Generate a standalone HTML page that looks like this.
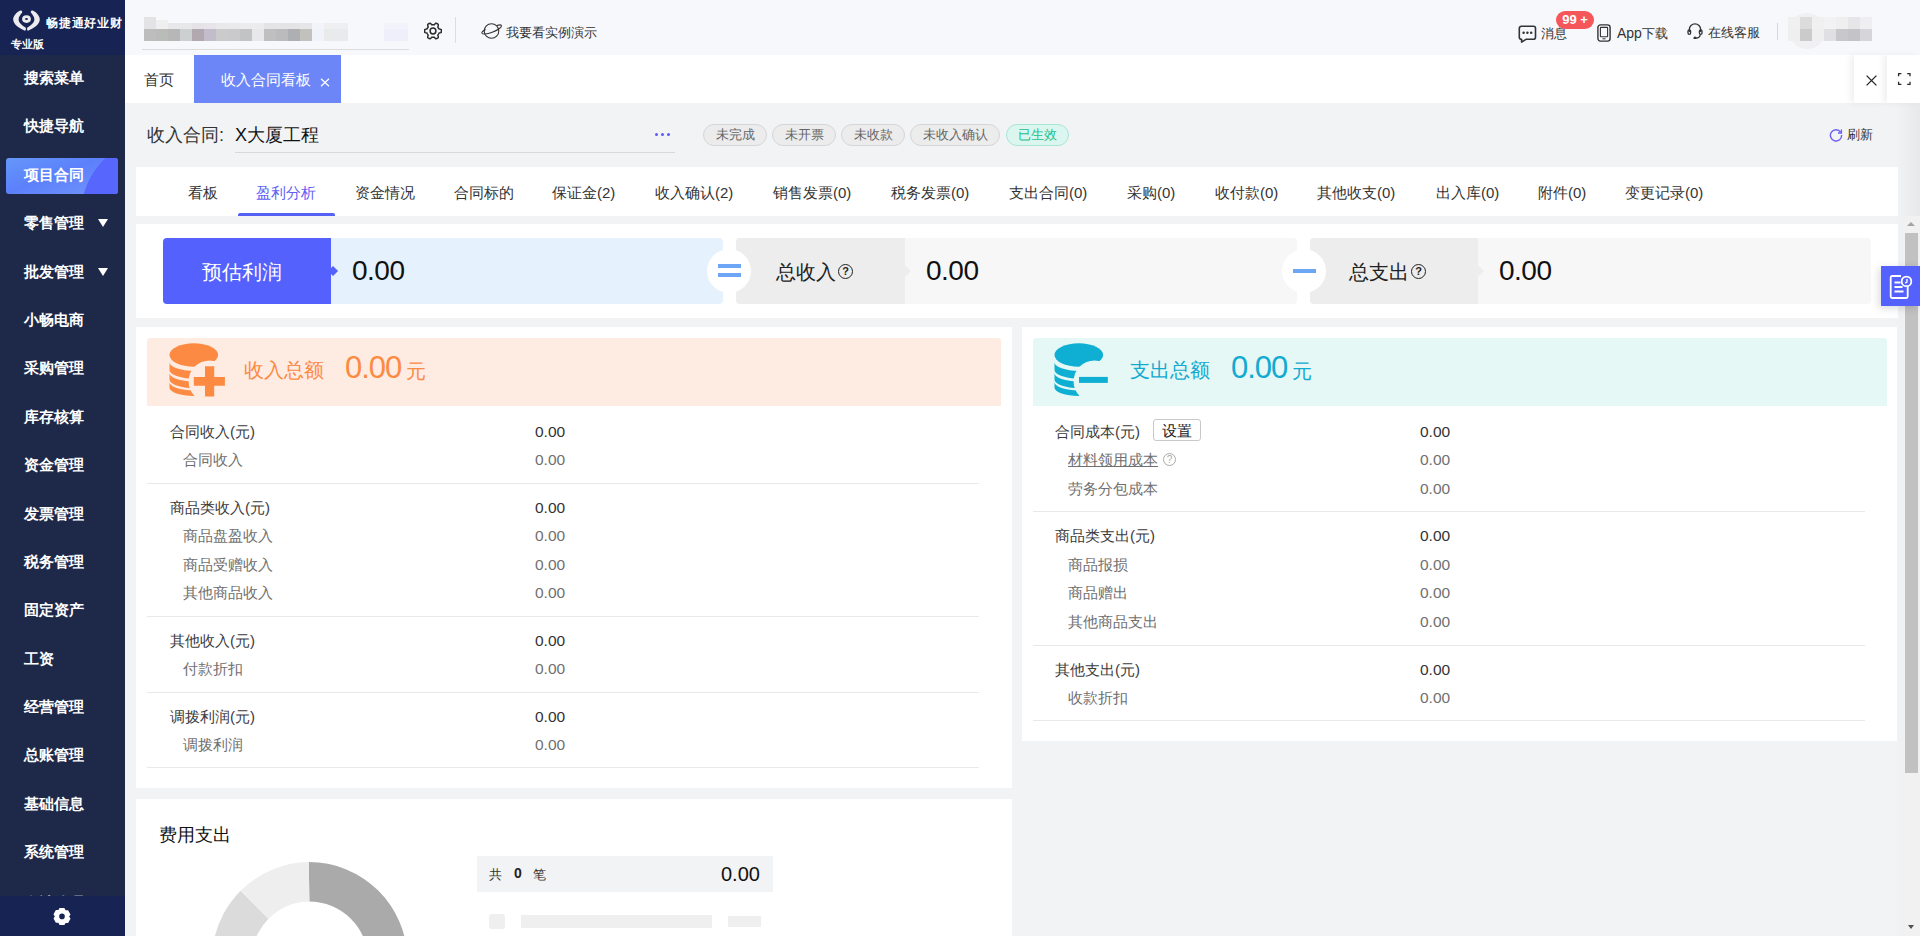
<!DOCTYPE html>
<html><head><meta charset="utf-8">
<style>
*{box-sizing:border-box;margin:0;padding:0}
html,body{width:1920px;height:936px;overflow:hidden;background:#f2f3f5;font-family:"Liberation Sans",sans-serif;color:#333}
.abs{position:absolute}
#side{position:absolute;left:0;top:0;width:125px;height:936px;background:#1e2949;overflow:hidden}
#logo{position:absolute;left:0;top:0;width:125px;height:55px;background:#172353}
.mi{position:absolute;left:24px;color:#fff;font-size:15px;font-weight:bold;line-height:20px;white-space:nowrap}
.tri{position:absolute;left:98px;width:0;height:0;border-left:5.5px solid transparent;border-right:5.5px solid transparent;border-top:8px solid #fff}
#sfoot{position:absolute;left:0;top:896px;width:125px;height:40px;background:#172353}
#hdr{position:absolute;left:125px;top:0;width:1795px;height:55px;background:#f7f8fc}
#tabbar{position:absolute;left:125px;top:55px;width:1795px;height:48px;background:#fff}
.px i,.px2 i{position:absolute;width:12px;height:12px;display:block}
.tag{position:absolute;top:124px;height:22px;border:1px solid #d6d6d6;border-radius:11px;background:#ececec;color:#666;font-size:13px;line-height:20px;text-align:center;white-space:nowrap}
.tab{position:absolute;top:17px;font-size:15px;color:#333;white-space:nowrap}
.bignum{position:absolute;top:255px;font-size:28px;color:#111;letter-spacing:-0.5px;white-space:nowrap}
.qm{position:absolute;width:15px;height:15px;border:1.5px solid #222;border-radius:50%;font-size:11px;font-weight:bold;line-height:12px;text-align:center;color:#222}
.qm::after{content:"?"}
.qm2{position:absolute;width:13px;height:13px;border:1px solid #aaa;border-radius:50%;font-size:10px;line-height:11px;text-align:center;color:#aaa}
.qm2::after{content:"?"}
.rl{position:absolute;font-size:15px;color:#3c3c3c;white-space:nowrap;line-height:20px}
.rv{position:absolute;font-size:15.5px;color:#333;white-space:nowrap;line-height:20px}
.sub{color:#707070}
.card{position:absolute;background:#fff}
</style></head><body>
<div id="side">
  <div id="logo"><svg class="abs" style="left:8px;top:6px" width="40" height="30" viewBox="0 0 40 30"><g fill="#ececf0"><path d="M12.2 4.6c1.4-.6 2.6.6 1.8 2.2C12.4 9 10.6 11 10.6 13.4c0 3 3.2 5.5 7 8.2.6.5.4 3.2-.6 3.1C11.8 22.6 5.2 18.6 5.2 13.6c0-3.8 3.6-7.4 7-9z"/><path d="M24.8 4.6c-1.4-.6-2.6.6-1.8 2.2 1.6 2.2 3.4 4.2 3.4 6.6 0 3-3.2 5.5-7 8.2-.6.5-.4 3.2.6 3.1 5.2-2.1 11.8-6.1 11.8-11.1 0-3.8-3.6-7.4-7-9z"/><ellipse cx="18.5" cy="13.1" rx="4.4" ry="3.8"/></g><ellipse cx="18.5" cy="13" rx="1.5" ry="1" fill="#1a2456"/></svg>
    <div class="abs" style="left:46px;top:16px;color:#fff;font-size:11.5px;font-weight:bold;letter-spacing:0.8px">畅捷通好业财</div>
    <div class="abs" style="left:11px;top:37px;color:#fff;font-size:11px;font-weight:bold">专业版</div>
  </div>
  <div class="mi" style="top:68px">搜索菜单</div>
  <div class="mi" style="top:116px">快捷导航</div>
  <div class="abs" style="left:6px;top:158px;width:112px;height:36px;border-radius:3px;overflow:hidden;background:linear-gradient(160deg,#6598fa 0%,#5c80fb 45%,#7596fb 100%)"><div class="abs" style="left:75px;top:-22px;width:158px;height:158px;border-radius:50%;background:#5767fd"></div></div>
  <div class="mi" style="top:165px">项目合同</div>
  <div class="mi" style="top:213px">零售管理</div><div class="tri" style="top:219px"></div>
  <div class="mi" style="top:262px">批发管理</div><div class="tri" style="top:268px"></div>
  <div class="mi" style="top:310px">小畅电商</div>
  <div class="mi" style="top:358px">采购管理</div>
  <div class="mi" style="top:407px">库存核算</div>
  <div class="mi" style="top:455px">资金管理</div>
  <div class="mi" style="top:504px">发票管理</div>
  <div class="mi" style="top:552px">税务管理</div>
  <div class="mi" style="top:600px">固定资产</div>
  <div class="mi" style="top:649px">工资</div>
  <div class="mi" style="top:697px">经营管理</div>
  <div class="mi" style="top:745px">总账管理</div>
  <div class="mi" style="top:794px">基础信息</div>
  <div class="mi" style="top:842px">系统管理</div>
  <div class="mi" style="top:893px">会计管理</div>
  <div id="sfoot"><svg class="abs" style="left:53px;top:11px" width="18" height="18" viewBox="0 0 18 18"><path fill="#fff" fill-rule="evenodd" d="M6.6 1h4.8l1.2 2.2 2.5.1 2.4 4.2-1.3 2.1 1.3 2.1-2.4 4.2-2.5.1L11.4 18H6.6l-1.2-2.2-2.5-.1L.5 11.5l1.3-2.1L.5 7.3l2.4-4.2 2.5-.1zM9 6.6a2.8 2.8 0 1 0 0 5.6 2.8 2.8 0 0 0 0-5.6z"/></svg></div>
</div>
<div id="hdr">
  <div class="px"><i style="left:19px;top:29px;background:#bdbdbd"></i><i style="left:31px;top:29px;background:#b9bcb9"></i><i style="left:43px;top:29px;background:#b7b7b7"></i><i style="left:55px;top:29px;background:#cdd0d1"></i><i style="left:67px;top:29px;background:#b2a8b0"></i><i style="left:79px;top:29px;background:#c2bccb"></i><i style="left:91px;top:29px;background:#cbcbcb"></i><i style="left:103px;top:29px;background:#cacacc"></i><i style="left:115px;top:29px;background:#c2c3c5"></i><i style="left:127px;top:29px;background:#e8e8ea"></i><i style="left:139px;top:29px;background:#bfbfbf"></i><i style="left:151px;top:29px;background:#bbbabd"></i><i style="left:163px;top:29px;background:#aeafb2"></i><i style="left:175px;top:29px;background:#c3c1bd"></i><i style="left:187px;top:29px;background:#f0f3fa"></i><i style="left:199px;top:29px;background:#e9eaec"></i><i style="left:211px;top:29px;background:#e9eaec"></i><i style="left:259px;top:29px;width:24px;background:#eeeffa"></i><i style="left:19px;top:17px;height:12px;background:#e3e3e5"></i><i style="left:31px;top:20px;height:9px;background:#efeff0"></i><i style="left:43px;top:23px;height:6px;background:#e8e8ea"></i><i style="left:55px;top:23px;height:6px;background:#e8e8ea"></i><i style="left:67px;top:23px;height:6px;background:#e6e3e8"></i><i style="left:79px;top:23px;height:6px;background:#e8e5ea"></i><i style="left:91px;top:23px;height:6px;background:#e9e9eb"></i><i style="left:103px;top:23px;height:6px;background:#eaeaec"></i><i style="left:115px;top:23px;height:6px;background:#ececee"></i><i style="left:127px;top:23px;height:6px;background:#ececee"></i><i style="left:139px;top:23px;height:6px;background:#e4e4e6"></i><i style="left:151px;top:23px;height:6px;background:#e4e4e6"></i><i style="left:163px;top:23px;height:6px;background:#e4e4e6"></i><i style="left:175px;top:23px;height:6px;background:#e6e6e8"></i><i style="left:187px;top:23px;height:6px;background:#f3f4f9"></i><i style="left:199px;top:23px;height:6px;background:#efeff1"></i><i style="left:211px;top:23px;height:6px;background:#efeff1"></i><i style="left:259px;top:23px;width:24px;height:6px;background:#f3f4fb"></i></div>
  <div class="abs" style="left:17px;top:49px;width:267px;height:1px;background:#dcdcdc"></div>
  <svg class="abs" style="left:298.5px;top:22px" width="18" height="18" viewBox="0 0 18 18" fill="none" stroke="#2a2a2a" stroke-width="1.5" stroke-linejoin="round"><path d="M17.40 9.00 L17.39 9.44 L17.35 9.88 L17.30 10.31 L16.74 10.64 L16.05 10.89 L15.36 11.07 L14.79 11.22 L14.66 11.52 L14.52 11.81 L14.37 12.10 L14.20 12.38 L14.02 12.64 L13.82 12.90 L13.97 13.48 L14.16 14.16 L14.29 14.88 L14.29 15.53 L13.94 15.80 L13.57 16.04 L13.20 16.27 L12.81 16.48 L12.42 16.67 L12.01 16.84 L11.44 16.52 L10.89 16.05 L10.39 15.54 L9.97 15.12 L9.65 15.17 L9.32 15.19 L9.00 15.20 L8.68 15.19 L8.35 15.17 L8.03 15.12 L7.61 15.54 L7.11 16.05 L6.56 16.52 L5.99 16.84 L5.58 16.67 L5.19 16.48 L4.80 16.27 L4.43 16.04 L4.06 15.80 L3.71 15.53 L3.71 14.88 L3.84 14.16 L4.03 13.48 L4.18 12.90 L3.98 12.64 L3.80 12.38 L3.63 12.10 L3.48 11.81 L3.34 11.52 L3.21 11.22 L2.64 11.07 L1.95 10.89 L1.26 10.64 L0.70 10.31 L0.65 9.88 L0.61 9.44 L0.60 9.00 L0.61 8.56 L0.65 8.12 L0.70 7.69 L1.26 7.36 L1.95 7.11 L2.64 6.93 L3.21 6.78 L3.34 6.48 L3.48 6.19 L3.63 5.90 L3.80 5.62 L3.98 5.36 L4.18 5.10 L4.03 4.52 L3.84 3.84 L3.71 3.12 L3.71 2.47 L4.06 2.20 L4.43 1.96 L4.80 1.73 L5.19 1.52 L5.58 1.33 L5.99 1.16 L6.56 1.48 L7.11 1.95 L7.61 2.46 L8.03 2.88 L8.35 2.83 L8.68 2.81 L9.00 2.80 L9.32 2.81 L9.65 2.83 L9.97 2.88 L10.39 2.46 L10.89 1.95 L11.44 1.48 L12.01 1.16 L12.42 1.33 L12.81 1.52 L13.20 1.73 L13.57 1.96 L13.94 2.20 L14.29 2.47 L14.29 3.12 L14.16 3.84 L13.97 4.52 L13.82 5.10 L14.02 5.36 L14.20 5.62 L14.37 5.90 L14.52 6.19 L14.66 6.48 L14.79 6.78 L15.36 6.93 L16.05 7.11 L16.74 7.36 L17.30 7.69 L17.35 8.12 L17.39 8.56Z"/><circle cx="9" cy="9" r="2.9"/></svg>
  <div class="abs" style="left:330px;top:17px;width:1px;height:26px;background:#dcdde0"></div>
  <svg class="abs" style="left:356px;top:22px" width="21" height="18" viewBox="0 0 21 18" fill="none" stroke="#333" stroke-width="1.1"><circle cx="10.5" cy="9" r="7.3"/><path d="M15.8 3.6c2.6-.9 4.3-.8 4.6 0 .5 1.5-3.6 4.6-9.2 6.6S1.4 12.6.9 11.1c-.3-.9 1.1-2.3 3.6-3.7"/></svg>
  <div class="abs" style="left:381px;top:24px;font-size:13px;color:#333">我要看实例演示</div>
  <svg class="abs" style="left:1393px;top:25px" width="19" height="18" viewBox="0 0 19 18" fill="none" stroke="#333" stroke-width="1.6" stroke-linejoin="round"><path d="M3.3 1.3h12.2a2 2 0 0 1 2 2v9a2 2 0 0 1-2 2H8l-4.4 2.8v-2.8h-.3a2 2 0 0 1-2-2v-9a2 2 0 0 1 2-2z"/><circle cx="5.6" cy="7.8" r="1.25" fill="#333" stroke="none"/><circle cx="9.4" cy="7.8" r="1.25" fill="#333" stroke="none"/><circle cx="13.2" cy="7.8" r="1.25" fill="#333" stroke="none"/></svg>
  <div class="abs" style="left:1416px;top:25px;font-size:13px;color:#333">消息</div>
  <div class="abs" style="left:1431px;top:11px;width:38px;height:18px;border-radius:9px;background:#f5565a;color:#fff;font-size:13px;font-weight:bold;line-height:18px;text-align:center;letter-spacing:0px">99 +</div>
  <svg class="abs" style="left:1472px;top:24px" width="14" height="18" viewBox="0 0 14 18" fill="none" stroke="#333" stroke-width="1.4"><rect x="0.9" y="0.9" width="12.2" height="16.2" rx="2.6"/><rect x="3.4" y="3.4" width="7.2" height="9.4" rx="0.5" stroke-width="1.1"/><path d="M5.5 14.8h3" stroke-width="1"/></svg>
  <div class="abs" style="left:1492px;top:25px;font-size:14px;color:#333">App<span style="font-size:13px">下载</span></div>
  <svg class="abs" style="left:1562px;top:22px" width="16" height="17" viewBox="0 0 16 17" fill="none" stroke="#333" stroke-width="1.3"><path d="M2.3 10V7.5a5.7 5.7 0 0 1 11.4 0V10"/><rect x="1" y="7.8" width="2.6" height="4.6" rx="1.3"/><rect x="12.4" y="7.8" width="2.6" height="4.6" rx="1.3"/><path d="M13.2 12.5c0 2-1.8 3.5-4.5 3.6"/><circle cx="8" cy="16" r="0.9" fill="#333"/></svg>
  <div class="abs" style="left:1583px;top:24px;font-size:13px;color:#333">在线客服</div>
  <div class="abs" style="left:1652px;top:23px;width:1px;height:17px;background:#d5d5d8"></div>
  <div class="abs" style="left:1664px;top:13px;width:36px;height:36px;border-radius:50%;background:#f0f0f2"></div>
  <div class="px2"><i style="left:1663px;top:17px;background:#f0f0f0"></i><i style="left:1663px;top:29px;background:#efefef"></i><i style="left:1675px;top:17px;background:#dcdcdc"></i><i style="left:1675px;top:29px;background:#cbcbcb"></i><i style="left:1687px;top:17px;background:#f0f0f0"></i><i style="left:1687px;top:29px;background:#efefef"></i><i style="left:1699px;top:17px;background:#f2f2f4"></i><i style="left:1699px;top:29px;background:#e0e0e2"></i><i style="left:1711px;top:17px;background:#efeff0"></i><i style="left:1711px;top:29px;background:#c8c8cc"></i><i style="left:1723px;top:17px;background:#e6e6e9"></i><i style="left:1723px;top:29px;background:#c3c3c8"></i><i style="left:1735px;top:17px;background:#efeff2"></i><i style="left:1735px;top:29px;background:#d6d6da"></i></div>
</div>
<div id="tabbar">
  <div class="abs" style="left:19px;top:16px;font-size:15px;color:#333">首页</div>
  <div class="abs" style="left:69px;top:0;width:147px;height:48px;background:#6c86f7;color:#fff;font-size:15px;padding:16px 0 0 27px">收入合同看板<svg style="position:absolute;left:126px;top:23px" width="10" height="9" viewBox="0 0 10 9" stroke="#fff" stroke-width="1.2"><path d="M1 0.8l8 7.4M9 0.8l-8 7.4"/></svg></div>
</div>
<!-- content -->
<div class="abs" style="left:1854px;top:55px;width:33px;height:48px;background:#fff;box-shadow:-4px 0 6px rgba(0,0,0,0.06)"></div>
<div class="abs" style="left:1887px;top:55px;width:33px;height:48px;background:#fff;box-shadow:-4px 0 6px rgba(0,0,0,0.06)"></div>
<svg class="abs" style="left:1865px;top:74px" width="13" height="13" viewBox="0 0 13 13" stroke="#222" stroke-width="1.3"><path d="M1.6 1.6l9.8 9.8M11.4 1.6L1.6 11.4"/></svg>
<svg class="abs" style="left:1897px;top:72px" width="15" height="14" viewBox="0 0 15 14" fill="none" stroke="#2a2a2a" stroke-width="1.3"><path d="M1.6 4.3V1.6h2.8M10.2 1.6H13v2.7M13 9.7v2.7h-2.8M4.4 12.4H1.6V9.7"/></svg>

<div class="abs" style="left:147px;top:123px;font-size:18px;color:#333;white-space:nowrap">收入合同:</div>
<div class="abs" style="left:235px;top:123px;font-size:18px;color:#111;white-space:nowrap">X大厦工程</div>
<div class="abs" style="left:235px;top:152px;width:440px;height:1px;background:#d9d9dc"></div>
<div class="abs" style="left:655px;top:132.8px;width:3.4px;height:3.4px;border-radius:50%;background:#5b5cf6;box-shadow:6px 0 0 #5b5cf6,12px 0 0 #5b5cf6"></div>
<div class="tag" style="left:703px;width:64px">未完成</div>
<div class="tag" style="left:772px;width:64px">未开票</div>
<div class="tag" style="left:841px;width:64px">未收款</div>
<div class="tag" style="left:910px;width:90px">未收入确认</div>
<div class="tag" style="left:1006px;width:63px;background:#dbf6ee;border-color:#a9e6d3;color:#1dbf8c">已生效</div>
<svg class="abs" style="left:1829px;top:128px" width="14" height="14" viewBox="0 0 14 14" fill="none" stroke="#6a5df7" stroke-width="1.4"><path d="M11.6 4.2A5.6 5.6 0 1 0 12.6 7"/><path d="M12.4 1.6v3.4H9" stroke-width="1.4"/></svg>
<div class="abs" style="left:1847px;top:126px;font-size:13px;color:#333">刷新</div>

<div class="card" style="left:136px;top:167px;width:1762px;height:49px">
  <div class="tab" style="left:52px">看板</div>
  <div class="tab" style="left:120px;color:#6160f4">盈利分析</div>
  <div class="abs" style="left:102px;top:46px;width:97px;height:3px;border-radius:2px 2px 0 0;background:#5560f5"></div>
  <div class="tab" style="left:219px">资金情况</div>
  <div class="tab" style="left:318px">合同标的</div>
  <div class="tab" style="left:416px">保证金(2)</div>
  <div class="tab" style="left:519px">收入确认(2)</div>
  <div class="tab" style="left:637px">销售发票(0)</div>
  <div class="tab" style="left:755px">税务发票(0)</div>
  <div class="tab" style="left:873px">支出合同(0)</div>
  <div class="tab" style="left:991px">采购(0)</div>
  <div class="tab" style="left:1079px">收付款(0)</div>
  <div class="tab" style="left:1181px">其他收支(0)</div>
  <div class="tab" style="left:1300px">出入库(0)</div>
  <div class="tab" style="left:1402px">附件(0)</div>
  <div class="tab" style="left:1489px">变更记录(0)</div>
</div>

<div class="card" style="left:136px;top:224px;width:1762px;height:94px"></div>
<!-- block A -->
<div class="abs" style="left:163px;top:238px;width:560px;height:66px;border-radius:4px;background:#e5f1fd;overflow:hidden">
  <div class="abs" style="left:0;top:0;width:168px;height:66px;background:#5461fd"></div>
</div>
<div class="abs" style="left:328px;top:266px;width:10px;height:10px;background:#5461fd;transform:rotate(45deg) scale(0.72)"></div>
<div class="abs" style="left:202px;top:259px;font-size:20px;color:#fff;white-space:nowrap">预估利润</div>
<div class="bignum" style="left:352px">0.00</div>
<!-- block B -->
<div class="abs" style="left:736px;top:238px;width:561px;height:66px;border-radius:4px;background:#f7f7f7;overflow:hidden">
  <div class="abs" style="left:0;top:0;width:169px;height:66px;background:#ededed"></div>
</div>
<div class="abs" style="left:901px;top:266px;width:10px;height:10px;background:#ededed;transform:rotate(45deg) scale(0.72)"></div>
<div class="abs" style="left:776px;top:259px;font-size:20px;color:#222;white-space:nowrap">总收入</div>
<div class="qm" style="left:838px;top:264px"></div>
<div class="bignum" style="left:926px">0.00</div>
<!-- block C -->
<div class="abs" style="left:1310px;top:238px;width:561px;height:66px;border-radius:4px;background:#f7f7f7;overflow:hidden">
  <div class="abs" style="left:0;top:0;width:168px;height:66px;background:#ededed"></div>
</div>
<div class="abs" style="left:1474px;top:266px;width:10px;height:10px;background:#ededed;transform:rotate(45deg) scale(0.72)"></div>
<div class="abs" style="left:1349px;top:259px;font-size:20px;color:#222;white-space:nowrap">总支出</div>
<div class="qm" style="left:1411px;top:264px"></div>
<div class="bignum" style="left:1499px">0.00</div>

<div class="abs" style="left:707px;top:249px;width:44px;height:44px;border-radius:50%;background:#fff"></div>
<div class="abs" style="left:718px;top:264px;width:23px;height:4px;background:#6ea6f6"></div>
<div class="abs" style="left:718px;top:273px;width:23px;height:4px;background:#6ea6f6"></div>
<div class="abs" style="left:1282px;top:249px;width:44px;height:44px;border-radius:50%;background:#fff"></div>
<div class="abs" style="left:1293px;top:269px;width:23px;height:4px;background:#6ea6f6"></div>
<!-- income card -->
<div class="card" style="left:136px;top:327px;width:876px;height:461px"></div>
<div class="abs" style="left:147px;top:338px;width:854px;height:68px;border-radius:3px 3px 0 0;background:#feece3"></div>
<svg class="abs" style="left:165px;top:340px" width="65" height="60" viewBox="0 0 65 60">
  <defs><mask id="mi"><rect width="65" height="60" fill="#fff"/><circle cx="44.6" cy="41.4" r="21" fill="#000"/></mask></defs>
  <g fill="#fd8a43" mask="url(#mi)">
    <ellipse cx="28.8" cy="15" rx="24.3" ry="11.7"/>
    <path d="M4.5 22.3A24.3 8.5 0 0 0 53.1 22.3V30.1A24.3 8.5 0 0 1 4.5 30.1Z"/>
    <path d="M4.5 32.9A24.3 8.5 0 0 0 53.1 32.9V39.6A24.3 8.5 0 0 1 4.5 39.6Z"/>
    <path d="M4.5 42A24.3 8.5 0 0 0 53.1 42V47.4A24.3 8.5 0 0 1 4.5 47.4Z"/>
  </g>
  <path fill="#fd8a43" d="M40 26.3h9.2v10.6h10.7v8.9H49.2v10.6H40V45.8H28.8v-8.9H40z"/>
</svg>
<div class="abs" style="left:244px;top:357px;font-size:20px;color:#fd8a43;white-space:nowrap">收入总额</div>
<div class="abs" style="left:345px;top:350px;font-size:31px;color:#fd8a43;letter-spacing:-1px;white-space:nowrap">0.00</div>
<div class="abs" style="left:406px;top:358px;font-size:20px;color:#fd8a43">元</div>
<div class="rl" style="left:170px;top:421.5px">合同收入(元)</div><div class="rv" style="left:535px;top:421.5px">0.00</div><div class="rl sub" style="left:183px;top:450px">合同收入</div><div class="rv sub" style="left:535px;top:450px">0.00</div><div class="rl" style="left:170px;top:497.5px">商品类收入(元)</div><div class="rv" style="left:535px;top:497.5px">0.00</div><div class="rl sub" style="left:183px;top:526px">商品盘盈收入</div><div class="rv sub" style="left:535px;top:526px">0.00</div><div class="rl sub" style="left:183px;top:554.5px">商品受赠收入</div><div class="rv sub" style="left:535px;top:554.5px">0.00</div><div class="rl sub" style="left:183px;top:583px">其他商品收入</div><div class="rv sub" style="left:535px;top:583px">0.00</div><div class="rl" style="left:170px;top:630.5px">其他收入(元)</div><div class="rv" style="left:535px;top:630.5px">0.00</div><div class="rl sub" style="left:183px;top:659px">付款折扣</div><div class="rv sub" style="left:535px;top:659px">0.00</div><div class="rl" style="left:170px;top:706.5px">调拨利润(元)</div><div class="rv" style="left:535px;top:706.5px">0.00</div><div class="rl sub" style="left:183px;top:735px">调拨利润</div><div class="rv sub" style="left:535px;top:735px">0.00</div><div class="abs" style="left:147px;top:483px;width:832px;height:1px;background:#e8e8e8"></div><div class="abs" style="left:147px;top:616px;width:832px;height:1px;background:#e8e8e8"></div><div class="abs" style="left:147px;top:692px;width:832px;height:1px;background:#e8e8e8"></div><div class="abs" style="left:147px;top:767px;width:832px;height:1px;background:#e8e8e8"></div>

<!-- expense card -->
<div class="card" style="left:1022px;top:327px;width:875px;height:414px"></div>
<div class="abs" style="left:1033px;top:338px;width:854px;height:68px;border-radius:3px 3px 0 0;background:#e6f8f5"></div>
<svg class="abs" style="left:1050px;top:340px" width="65" height="60" viewBox="0 0 65 60">
  <defs><mask id="me"><rect width="65" height="60" fill="#fff"/><circle cx="44.6" cy="41.4" r="21" fill="#000"/></mask></defs>
  <g fill="#0fafd3" mask="url(#me)">
    <ellipse cx="28.8" cy="15" rx="24.3" ry="11.7"/>
    <path d="M4.5 22.3A24.3 8.5 0 0 0 53.1 22.3V30.1A24.3 8.5 0 0 1 4.5 30.1Z"/>
    <path d="M4.5 32.9A24.3 8.5 0 0 0 53.1 32.9V39.6A24.3 8.5 0 0 1 4.5 39.6Z"/>
    <path d="M4.5 42A24.3 8.5 0 0 0 53.1 42V47.4A24.3 8.5 0 0 1 4.5 47.4Z"/>
  </g>
  <rect fill="#0fafd3" x="29" y="36.9" width="28.8" height="6"/>
</svg>
<div class="abs" style="left:1130px;top:357px;font-size:20px;color:#12aad1;white-space:nowrap">支出总额</div>
<div class="abs" style="left:1231px;top:350px;font-size:31px;color:#12aad1;letter-spacing:-1px;white-space:nowrap">0.00</div>
<div class="abs" style="left:1292px;top:358px;font-size:20px;color:#12aad1">元</div>
<div class="rl" style="left:1055px;top:421.5px">合同成本(元)</div><div class="abs" style="left:1153px;top:419px;width:48px;height:22px;border:1px solid #c9c9c9;border-radius:3px;font-size:15px;color:#222;text-align:center;line-height:22px">设置</div><div class="rv" style="left:1420px;top:421.5px">0.00</div><div class="rl sub" style="left:1068px;top:450px"><span style="text-decoration:underline;text-underline-offset:1px">材料领用成本</span></div><div class="qm2" style="left:1163px;top:453px"></div><div class="rv sub" style="left:1420px;top:450px">0.00</div><div class="rl sub" style="left:1068px;top:478.5px">劳务分包成本</div><div class="rv sub" style="left:1420px;top:478.5px">0.00</div><div class="rl" style="left:1055px;top:526px">商品类支出(元)</div><div class="rv" style="left:1420px;top:526px">0.00</div><div class="rl sub" style="left:1068px;top:554.5px">商品报损</div><div class="rv sub" style="left:1420px;top:554.5px">0.00</div><div class="rl sub" style="left:1068px;top:583px">商品赠出</div><div class="rv sub" style="left:1420px;top:583px">0.00</div><div class="rl sub" style="left:1068px;top:611.5px">其他商品支出</div><div class="rv sub" style="left:1420px;top:611.5px">0.00</div><div class="rl" style="left:1055px;top:659.5px">其他支出(元)</div><div class="rv" style="left:1420px;top:659.5px">0.00</div><div class="rl sub" style="left:1068px;top:688px">收款折扣</div><div class="rv sub" style="left:1420px;top:688px">0.00</div><div class="abs" style="left:1033px;top:511px;width:832px;height:1px;background:#e8e8e8"></div><div class="abs" style="left:1033px;top:645px;width:832px;height:1px;background:#e8e8e8"></div><div class="abs" style="left:1033px;top:720px;width:832px;height:1px;background:#e8e8e8"></div>

<!-- fee card -->
<div class="card" style="left:136px;top:799px;width:876px;height:137px"></div>
<div class="abs" style="left:159px;top:823px;font-size:18px;color:#111;white-space:nowrap">费用支出</div>
<svg class="abs" style="left:200px;top:855px" width="220" height="81" viewBox="0 0 220 81">
  <g transform="translate(110.30 105.50)">
    <path d="M-1.55 -98.49A98.5 98.5 0 0 1 0 98.5V59A59 59 0 0 0 -0.93 -58.99Z" fill="#aaaaaa"/>
    <path d="M0 98.5A98.5 98.5 0 0 1 -69.65 -69.65L-41.72 -41.72A59 59 0 0 0 0 59Z" fill="#dbdbdb"/>
    <path d="M-69.65 -69.65A98.5 98.5 0 0 1 -1.55 -98.49L-0.93 -58.99A59 59 0 0 0 -41.72 -41.72Z" fill="#eeeeee"/>
  </g>
</svg>
<div class="abs" style="left:477px;top:856px;width:296px;height:36px;background:#f2f3f5"></div>
<div class="abs" style="left:489px;top:866px;font-size:13px;color:#333;white-space:nowrap">共</div>
<div class="abs" style="left:514px;top:865px;font-size:14px;font-weight:bold;color:#222">0</div>
<div class="abs" style="left:533px;top:866px;font-size:13px;color:#333">笔</div>
<div class="abs" style="left:721px;top:863px;font-size:20px;color:#111">0.00</div>
<div class="abs" style="left:489px;top:914px;width:16px;height:15px;border-radius:3px;background:#efefef"></div>
<div class="abs" style="left:521px;top:915px;width:191px;height:13px;background:#efefef"></div>
<div class="abs" style="left:728px;top:916px;width:33px;height:11px;background:#efefef"></div>

<div class="abs" style="left:1895px;top:103px;width:25px;height:833px;background:linear-gradient(90deg,rgba(0,0,0,0),rgba(0,0,0,0.045))"></div>
<!-- scrollbar -->
<div class="abs" style="left:1903px;top:216px;width:17px;height:720px;background:#f1f1f1"></div>
<div class="abs" style="left:1905px;top:233px;width:13px;height:540px;background:#c1c1c1"></div>
<div class="abs" style="left:1907px;top:222px;width:0;height:0;border-left:4px solid transparent;border-right:4px solid transparent;border-bottom:4px solid #a3a3a3"></div>
<div class="abs" style="left:1908px;top:925px;width:0;height:0;border-left:3.5px solid transparent;border-right:3.5px solid transparent;border-top:4px solid #505050"></div>
<!-- floating -->
<div class="abs" style="left:1881px;top:266px;width:39px;height:40px;background:#5461fd;box-shadow:-2px 2px 8px rgba(0,0,0,0.15)"></div>
<svg class="abs" style="left:1889px;top:274px" width="24" height="26" viewBox="0 0 24 26" fill="none" stroke="#fff" stroke-width="1.8"><path d="M12 2H3.2a1.5 1.5 0 0 0-1.5 1.5v19a1.5 1.5 0 0 0 1.5 1.5h14a1.5 1.5 0 0 0 1.5-1.5v-10"/><path d="M5.5 8.5h6M5.5 13h8M5.5 17.5h9" stroke-width="2"/><circle cx="17.5" cy="7.4" r="4.8" fill="#5461fd"/><path d="M18 5v3l-1.8 1.2" stroke-width="1.4"/></svg>
</body></html>
